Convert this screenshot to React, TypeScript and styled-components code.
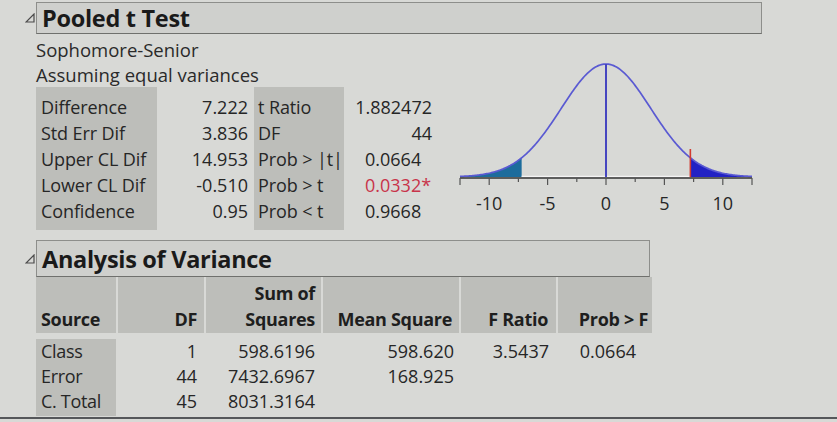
import React from "react";
import styled, { createGlobalStyle } from "styled-components";

const GlobalStyle = createGlobalStyle`
  html, body { margin: 0; padding: 0; background: #d8d9d6; }
  body { font-family: "Open Sans", "Noto Sans", "DejaVu Sans", sans-serif; color: #242424; }
  * { box-sizing: border-box; }
`;

const Page = styled.div`
  width: 837px;
  height: 419px;
  padding: 2px 0 0 20px;
  border-bottom: 2px solid #55575a;
  overflow: hidden;
`;

const HeaderRow = styled.div`
  display: flex;
  align-items: center;
`;

const Disclosure = styled.div`
  width: 16px;
  display: flex;
  justify-content: flex-end;
  padding-right: 1px;
  svg { display: block; }
`;

const TitleBar = styled.div<{ $w: number; $h: number }>`
  width: ${(p) => p.$w}px;
  height: ${(p) => p.$h}px;
  background: #cfd0cd;
  border: 1px solid #8d8e8b;
  border-bottom-color: #6f706d;
  display: flex;
  align-items: center;
  padding-left: 5px;
`;

const Title = styled.div<{ $size: number }>`
  font-weight: 700;
  font-size: ${(p) => p.$size}px;
  letter-spacing: -0.3px;
  color: #1a1a1a;
`;

const Body = styled.div`
  padding-left: 16px;
  display: flex;
  align-items: flex-start;
`;

const LeftCol = styled.div`
  display: flex;
  flex-direction: column;
  padding-top: 3px;
`;

const Caption = styled.div`
  font-size: 18.5px;
  line-height: 25px;
  color: #2a2a2a;
  white-space: nowrap;
`;

const StatTable = styled.div`
  display: flex;
`;

const StatCol = styled.div<{ $w: number; $shaded?: boolean }>`
  width: ${(p) => p.$w}px;
  background: ${(p) => (p.$shaded ? "#bdbeba" : "transparent")};
  padding: 7px 0 6px;
  display: flex;
  flex-direction: column;
`;

const StatCell = styled.div<{ $align: "left" | "right"; $pl?: number; $pr?: number; $red?: boolean; $num?: boolean }>`
  height: 26px;
  line-height: 26px;
  font-size: 18px;
  letter-spacing: ${(p) => (p.$num ? 0 : -0.1)}px;
  text-align: ${(p) => p.$align};
  padding-left: ${(p) => p.$pl ?? 0}px;
  padding-right: ${(p) => p.$pr ?? 0}px;
  color: ${(p) => (p.$red ? "#c8344a" : "#262626")};
  white-space: nowrap;
`;

const Chart = styled.svg`
  display: block;
  margin-left: 10px;
`;

const Section = styled.div<{ $mt: number }>`
  margin-top: ${(p) => p.$mt}px;
`;

const AnovaBody = styled.div`
  padding-left: 16px;
`;

const Grid = styled.div`
  display: grid;
  grid-template-columns: 80px 86px 115px 136px 95px 94px;
  column-gap: 2px;
  width: fit-content;
`;

const HeadCell = styled.div<{ $align: "left" | "right"; $pr?: number }>`
  height: 56px;
  margin-bottom: 6px;
  background: #bdbeba;
  display: flex;
  flex-direction: column;
  justify-content: flex-end;
  align-items: ${(p) => (p.$align === "left" ? "flex-start" : "flex-end")};
  text-align: ${(p) => p.$align};
  padding: 0 ${(p) => p.$pr ?? 6}px 1px 5px;
  font-weight: 700;
  font-size: 18px;
  letter-spacing: -0.3px;
  line-height: 26px;
  color: #1e1e1e;
  white-space: nowrap;
`;

const DataCell = styled.div<{ $shaded?: boolean; $align: "left" | "right"; $pr?: number; $last?: boolean }>`
  height: ${(p) => (p.$last ? 27 : 25)}px;
  line-height: 25px;
  background: ${(p) => (p.$shaded ? "#bdbeba" : "transparent")};
  text-align: ${(p) => p.$align};
  padding: 0 ${(p) => p.$pr ?? 6}px 0 5px;
  font-size: 18px;
  letter-spacing: ${(p) => (p.$align === "left" ? -0.3 : 0)}px;
  color: #262626;
  white-space: nowrap;
`;

const Triangle = () => (
  <svg width="10" height="10" viewBox="0 0 10 10">
    <path d="M9 1 L9 9 L1 9 Z" fill="none" stroke="#4a4a4a" strokeWidth="1.2" />
  </svg>
);

const X0 = 605;
const K = 11.68;
const BASE = 178;
const H = 113;
const S = 3.836;
const px = (u: number) => X0 + u * K;
const py = (u: number) => BASE - H * Math.exp((-u * u) / (2 * S * S));

function range(a: number, b: number, step: number) {
  const out: number[] = [];
  for (let u = a; u < b - 1e-9; u += step) out.push(u);
  out.push(b);
  return out;
}

const curvePath = range(-12.5, 12.5, 0.1)
  .map((u, i) => `${i ? "L" : "M"}${px(u).toFixed(2)} ${py(u).toFixed(2)}`)
  .join(" ");

const tail = (a: number, b: number) =>
  range(a, b, 0.1)
    .map((u, i) => `${i ? "L" : "M"}${px(u).toFixed(2)} ${py(u).toFixed(2)}`)
    .join(" ") + ` L${px(b).toFixed(2)} ${BASE} L${px(a).toFixed(2)} ${BASE} Z`;

const ticks = range(-12.5, 12.5, 2.5);
const labels = [-10, -5, 0, 5, 10];

const Distribution = () => (
  <Chart width={305} height={190} viewBox="455 35 305 190">
    <path d={tail(-12.5, -7.222)} fill="#1d6c9c" />
    <path d={tail(7.222, 12.5)} fill="#2222c4" />
    <line x1={px(-7.222)} y1={BASE - 0.5} x2={px(7.222)} y2={BASE - 0.5} stroke="#f4f4f4" strokeWidth="1.5" />
    <path d={curvePath} fill="none" stroke="#5a5ad2" strokeWidth="1.7" />
    <line x1={X0} y1={py(0)} x2={X0} y2={BASE} stroke="#4646c0" strokeWidth="2" />
    <line x1={px(7.222)} y1={150} x2={px(7.222)} y2={BASE} stroke="#d23a30" strokeWidth="1.6" />
    <line x1={px(-12.5)} y1={BASE + 1} x2={px(12.5)} y2={BASE + 1} stroke="#333" strokeWidth="1.6" />
    {ticks.map((t) => {
      const major = labels.includes(t) || Math.abs(t) === 12.5;
      return (
        <line key={t} x1={px(t)} y1={BASE + 1} x2={px(t)} y2={BASE + (major ? 8 : 5)} stroke="#555" strokeWidth="1.2" />
      );
    })}
    {labels.map((l) => (
      <text
        key={l}
        x={px(l)}
        y={211}
        textAnchor="middle"
        fontSize="18"
        fontFamily="'Open Sans', 'Noto Sans', sans-serif"
        fill="#262626"
      >
        {l}
      </text>
    ))}
  </Chart>
);

const stats = [
  ["Difference", "7.222", "t Ratio", "1.882472"],
  ["Std Err Dif", "3.836", "DF", "44"],
  ["Upper CL Dif", "14.953", "Prob > |t|", "0.0664"],
  ["Lower CL Dif", "-0.510", "Prob > t", "0.0332*"],
  ["Confidence", "0.95", "Prob < t", "0.9668"],
];

const anovaRows = [
  ["Class", "1", "598.6196", "598.620", "3.5437", "0.0664"],
  ["Error", "44", "7432.6967", "168.925", "", ""],
  ["C. Total", "45", "8031.3164", "", "", ""],
];

const dataPad = [6, 7, 6, 5, 7, 16];

export default function App() {
  return (
    <>
      <GlobalStyle />
      <Page>
        <Section $mt={0}>
          <HeaderRow>
            <Disclosure>
              <Triangle />
            </Disclosure>
            <TitleBar $w={726} $h={32}>
              <Title $size={23.5}>Pooled t Test</Title>
            </TitleBar>
          </HeaderRow>
          <Body>
            <LeftCol>
              <Caption>Sophomore-Senior</Caption>
              <Caption>Assuming equal variances</Caption>
              <StatTable>
                <StatCol $w={121} $shaded>
                  {stats.map((r) => (
                    <StatCell key={r[0]} $align="left" $pl={5}>
                      {r[0]}
                    </StatCell>
                  ))}
                </StatCol>
                <StatCol $w={97}>
                  {stats.map((r) => (
                    <StatCell key={r[0]} $align="right" $pr={6} $num>
                      {r[1]}
                    </StatCell>
                  ))}
                </StatCol>
                <StatCol $w={90} $shaded>
                  {stats.map((r) => (
                    <StatCell key={r[0]} $align="left" $pl={4}>
                      {r[2]}
                    </StatCell>
                  ))}
                </StatCol>
                <StatCol $w={102}>
                  {stats.map((r, i) =>
                    i < 2 ? (
                      <StatCell key={r[0]} $align="right" $pr={14} $num>
                        {r[3]}
                      </StatCell>
                    ) : (
                      <StatCell key={r[0]} $align="left" $pl={21} $red={i === 3} $num>
                        {r[3]}
                      </StatCell>
                    )
                  )}
                </StatCol>
              </StatTable>
            </LeftCol>
            <Distribution />
          </Body>
        </Section>

        <Section $mt={10}>
          <HeaderRow>
            <Disclosure>
              <Triangle />
            </Disclosure>
            <TitleBar $w={614} $h={37}>
              <Title $size={23.5}>Analysis of Variance</Title>
            </TitleBar>
          </HeaderRow>
          <AnovaBody>
            <Grid>
              <HeadCell $align="left">Source</HeadCell>
              <HeadCell $align="right" $pr={7}>DF</HeadCell>
              <HeadCell $align="right" $pr={6}>
                <span>Sum of</span>
                <span>Squares</span>
              </HeadCell>
              <HeadCell $align="right" $pr={7}>Mean Square</HeadCell>
              <HeadCell $align="right" $pr={8}>F Ratio</HeadCell>
              <HeadCell $align="right" $pr={4}>Prob &gt; F</HeadCell>
              {anovaRows.map((row, ri) =>
                row.map((v, ci) => (
                  <DataCell
                    key={`${ri}-${ci}`}
                    $shaded={ci === 0}
                    $align={ci === 0 ? "left" : "right"}
                    $pr={dataPad[ci]}
                    $last={ri === anovaRows.length - 1}
                  >
                    {v}
                  </DataCell>
                ))
              )}
            </Grid>
          </AnovaBody>
        </Section>
      </Page>
    </>
  );
}
